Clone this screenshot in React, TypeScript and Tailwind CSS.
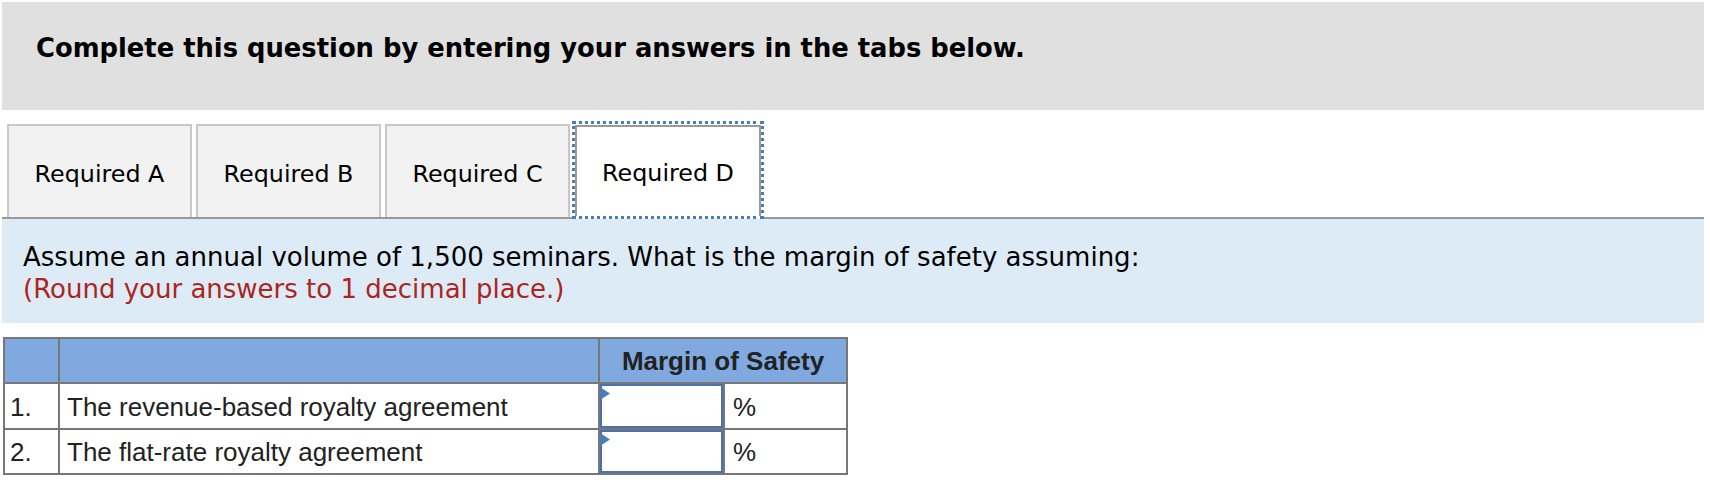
import React from 'react'

const TABS = ['Required A', 'Required B', 'Required C']

const ROWS = [
  { num: '1.', label: 'The revenue-based royalty agreement' },
  { num: '2.', label: 'The flat-rate royalty agreement' }
]

function Marker() {
  return (
    <svg className="absolute left-[-2px] top-[1px]" width="10" height="13" viewBox="0 0 10 13">
      <polygon points="0,0 10,6.5 0,13" fill="#4a7ebb" />
    </svg>
  )
}

export default function App() {
  return (
    <div className="w-[1710px] h-[492px] bg-white pl-[2px] pt-[2px] font-['DejaVu_Sans',Verdana,sans-serif] text-black">
      <div className="w-[1702px]">
        <div className="h-[108px] bg-[#e0e0e0] pl-[34px] pt-[31px] text-[25.8px] leading-[30px] font-bold">
          Complete this question by entering your answers in the tabs below.
        </div>

        <div className="mt-[11px] h-[98px] flex items-end border-b-2 border-[#999] pl-[5px]">
          {TABS.map((t, i) => (
            <div
              key={t}
              className={`h-[93px] w-[185px] ${i === 0 ? '' : 'ml-[4px]'} flex items-center justify-center pt-[6px] border-2 border-b-0 border-[#c8c8c8] bg-[#f2f2f2] text-[23.8px]`}
            >
              {t}
            </div>
          ))}
          <div className="relative z-10 ml-[2px] mb-[-2px] h-[98px] w-[192px] border-[3px] border-dotted border-[#4a7ebb] bg-white">
            <div className="mt-[1px] h-[calc(100%-1px)] border-2 border-b-0 border-[#999] flex items-center justify-center pt-[4px] text-[23.8px]">
              Required D
            </div>
          </div>
        </div>

        <div className="h-[104px] bg-[#ddebf7] pl-[21px] pt-[22px] text-[26px] leading-[32px]">
          <div>Assume an annual volume of 1,500 seminars. What is the margin of safety assuming:</div>
          <div className="text-[#ac2520]">(Round your answers to 1 decimal place.)</div>
        </div>

        <div className="mt-[14px] ml-[1px] w-fit grid grid-cols-[53px_538px_123px_121px] grid-rows-[43px_44px_43px] gap-[2px] p-[2px] bg-[#777] font-['Liberation_Sans',Arial,sans-serif] text-[26px] text-[#222]">
          <div className="bg-[#80aadf]" />
          <div className="bg-[#80aadf]" />
          <div className="col-span-2 bg-[#80aadf] flex items-center justify-center pt-[2px] font-bold">Margin of Safety</div>
          {ROWS.map((r) => (
            <React.Fragment key={r.num}>
              <div className="bg-white flex items-center pt-[2px] pl-[5px]">{r.num}</div>
              <div className="bg-white flex items-center pt-[2px] pl-[7px]">{r.label}</div>
              <div className="relative bg-white border-2 border-[#4a72b0]">
                <Marker />
              </div>
              <div className="bg-white flex items-center pt-[2px] pl-[8px]">%</div>
            </React.Fragment>
          ))}
        </div>
      </div>
    </div>
  )
}
